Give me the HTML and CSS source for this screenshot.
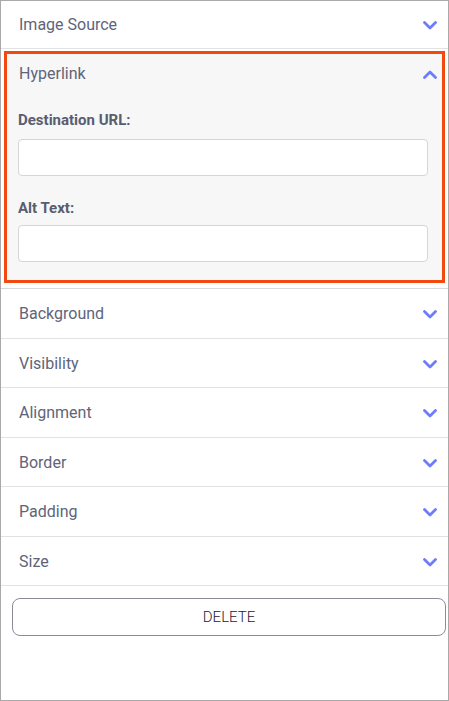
FILE: index.html
```html
<!DOCTYPE html>
<html lang="en">
<head>
  <meta charset="UTF-8" />
  <meta name="viewport" content="width=device-width, initial-scale=1" />
  <title>Image Settings</title>
  <link rel="stylesheet" href="styles.css">
</head>
<body>

  <div class="panel">

    <div class="acc-item first">
      <div class="acc-head">
        <span>Image Source</span>
        <svg class="chev" width="14" height="9" viewBox="0 0 14 9"><path d="M1.5 1.5 L7 7 L12.5 1.5" /></svg>
      </div>
    </div>

    <!-- Open section -->
    <div class="acc-item open">
      <div class="acc-box">
        <div class="acc-head">
          <span>Hyperlink</span>
          <svg class="chev" width="14" height="9" viewBox="0 0 14 9"><path d="M1.5 7.5 L7 2 L12.5 7.5" /></svg>
        </div>
        <div class="acc-body">
          <label for="destUrl">Destination URL:</label>
          <input id="destUrl" type="text" />
          <label for="altText" class="second">Alt Text:</label>
          <input id="altText" type="text" />
        </div>
      </div>
    </div>

    <div class="acc-item">
      <div class="acc-head">
        <span>Background</span>
        <svg class="chev" width="14" height="9" viewBox="0 0 14 9"><path d="M1.5 1.5 L7 7 L12.5 1.5" /></svg>
      </div>
    </div>
    <div class="acc-item">
      <div class="acc-head">
        <span>Visibility</span>
        <svg class="chev" width="14" height="9" viewBox="0 0 14 9"><path d="M1.5 1.5 L7 7 L12.5 1.5" /></svg>
      </div>
    </div>
    <div class="acc-item">
      <div class="acc-head">
        <span>Alignment</span>
        <svg class="chev" width="14" height="9" viewBox="0 0 14 9"><path d="M1.5 1.5 L7 7 L12.5 1.5" /></svg>
      </div>
    </div>
    <div class="acc-item">
      <div class="acc-head">
        <span>Border</span>
        <svg class="chev" width="14" height="9" viewBox="0 0 14 9"><path d="M1.5 1.5 L7 7 L12.5 1.5" /></svg>
      </div>
    </div>
    <div class="acc-item">
      <div class="acc-head">
        <span>Padding</span>
        <svg class="chev" width="14" height="9" viewBox="0 0 14 9"><path d="M1.5 1.5 L7 7 L12.5 1.5" /></svg>
      </div>
    </div>
    <div class="acc-item">
      <div class="acc-head">
        <span>Size</span>
        <svg class="chev" width="14" height="9" viewBox="0 0 14 9"><path d="M1.5 1.5 L7 7 L12.5 1.5" /></svg>
      </div>
    </div>

    <button class="delete-btn">DELETE</button>
  </div>

</body>
</html>
```

FILE: styles.css
```css
* {
  box-sizing: border-box;
}
body {
  margin: 0;
  font-family: Roboto, "Liberation Sans", sans-serif;
  background: #fff;
}
.panel {
  width: 449px;
  height: 701px;
  border: 1px solid #a9a9a9;
  display: flex;
  flex-direction: column;
  overflow: hidden;
}
.acc-item {
  border-bottom: 1px solid #e2e2e2;
}
.acc-head {
  display: flex;
  align-items: center;
  justify-content: space-between;
  height: 48.5px;
  padding: 1px 11px 0 18px;
  font-size: 16px;
  color: #60647a;
}
.acc-item.first .acc-head {
  height: 47px;
  padding-top: 0;
}
.chev {
  margin-top: 2px;
}
.chev path {
  fill: none;
  stroke: #6c7cfd;
  stroke-width: 2.8;
  stroke-linecap: round;
  stroke-linejoin: round;
}

/* Open section */
.acc-item.open {
  padding: 2px 3px 5px 3px;
  border-bottom-color: #d9d9d9;
}
.acc-box {
  border: 3px solid #f2490f;
  background: #f7f7f7;
}
.acc-box .acc-head {
  height: 38px;
  padding: 0 5px 0 12px;
}
.acc-body {
  display: flex;
  flex-direction: column;
  padding: 18px 14px 18px 11px;
}
.acc-body label {
  font-size: 15px;
  font-weight: 700;
  line-height: 20px;
  color: #585d70;
  margin-bottom: 9px;
}
.acc-body label.second {
  margin-top: 22px;
  margin-bottom: 7px;
}
.acc-body input {
  height: 37px;
  border: 1px solid #d6d6d6;
  border-radius: 4px;
  background: #fff;
  font-size: 15px;
  padding: 0 10px;
}
.delete-btn {
  margin: 12px 2px 0 11px;
  height: 38px;
  border: 1.5px solid #8a8d98;
  border-radius: 8px;
  background: #fff;
  font-family: Roboto, "Liberation Sans", sans-serif;
  font-size: 15px;
  font-weight: 300;
  color: #1c2030;
  cursor: pointer;
}
```
